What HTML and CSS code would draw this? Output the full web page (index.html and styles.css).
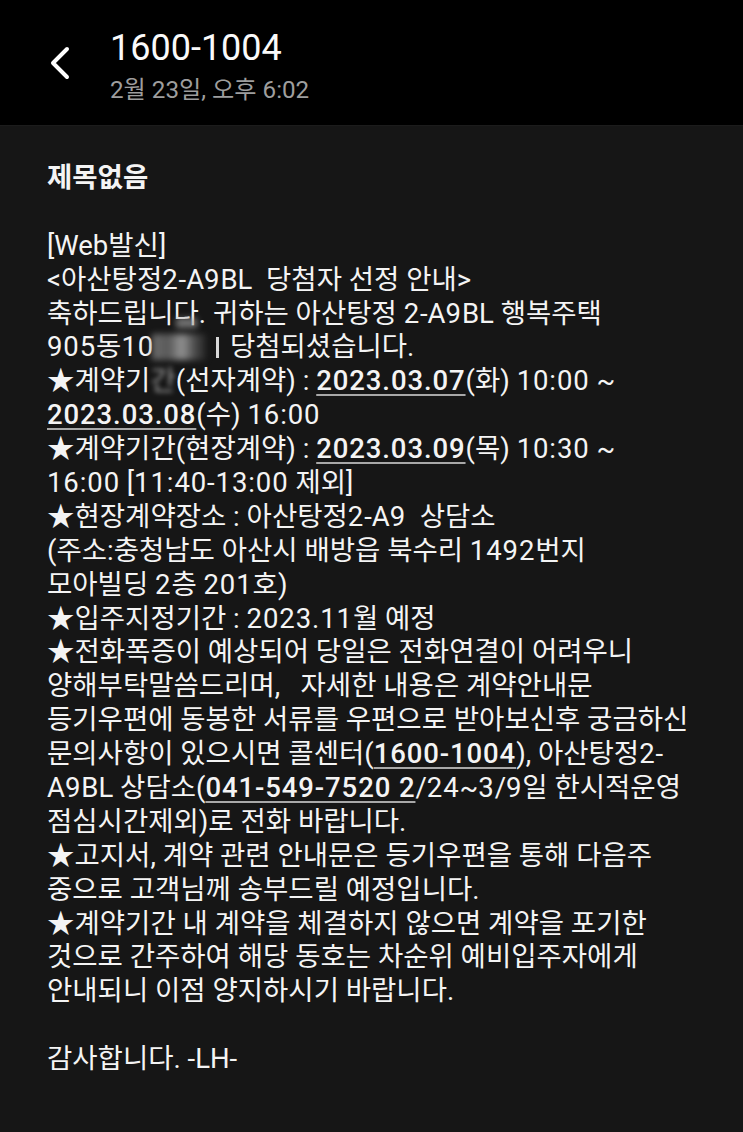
FILE: index.html
```html
<!DOCTYPE html>
<html lang="ko">
<head>
<meta charset="utf-8">
<title>1600-1004</title>
<link rel="stylesheet" href="styles.css">
</head>
<body>
<header class="topbar">
  <svg class="back" viewBox="0 0 24 36" width="24" height="36" aria-hidden="true">
    <path d="M19 3 L5 17 L19 31" fill="none" stroke="#fff" stroke-width="4" stroke-linecap="round" stroke-linejoin="round"/>
  </svg>
  <div class="titles">
    <div class="title">1600-1004</div>
    <div class="date">2월 23일, 오후 6:02</div>
  </div>
</header>
<main class="msg">
  <div class="line subject">제목없음</div>
  <div class="line blank"></div>
  <div class="line">[Web발신]</div>
  <div class="line">&lt;아산탕정<span class="n">2</span>-A<span class="n">9</span>BL  당첨자 선정 안내&gt;</div>
  <div class="line">축하드립니<span class="smudged">다</span>. 귀하는 아산탕정 <span class="n">2</span>-A<span class="n">9</span>BL 행복주택</div>
  <div class="line"><span class="n">905</span>동<span class="n">10</span><span class="blur"></span><span class="bar"></span> 당첨되셨습니다.</div>
  <div class="line">★계약기<span class="hide">간</span>(선자계약) : <span class="n u">2023.03.07</span>(화) <span class="n">10:00</span> ~</div>
  <div class="line"><span class="n u">2023.03.08</span>(수) <span class="n">16:00</span></div>
  <div class="line">★계약기간(현장계약) : <span class="n u">2023.03.09</span>(목) <span class="n">10:30</span> ~</div>
  <div class="line"><span class="n">16:00</span> [<span class="n">11:40-13:00</span> 제외]</div>
  <div class="line">★현장계약장소 : 아산탕정<span class="n">2</span>-A<span class="n">9</span>  상담소</div>
  <div class="line">(주소:충청남도 아산시 배방읍 북수리 <span class="n">1492</span>번지</div>
  <div class="line">모아빌딩 <span class="n">2</span>층 <span class="n">201</span>호)</div>
  <div class="line">★입주지정기간 : <span class="n">2023.11</span>월 예정</div>
  <div class="line">★전화폭증이 예상되어 당일은 전화연결이 어려우니</div>
  <div class="line">양해부탁말씀드리며,   자세한 내용은 계약안내문</div>
  <div class="line">등기우편에 동봉한 서류를 우편으로 받아보신후 궁금하신</div>
  <div class="line">문의사항이 있으시면 콜센터(<span class="n u">1600-1004</span>), 아산탕정<span class="n">2</span>-</div>
  <div class="line">A<span class="n">9</span>BL 상담소(<span class="n u">041-549-7520 2</span>/<span class="n">24</span>~<span class="n">3</span>/<span class="n">9</span>일 한시적운영</div>
  <div class="line">점심시간제외)로 전화 바랍니다.</div>
  <div class="line">★고지서, 계약 관련 안내문은 등기우편을 통해 다음주</div>
  <div class="line">중으로 고객님께 송부드릴 예정입니다.</div>
  <div class="line">★계약기간 내 계약을 체결하지 않으면 계약을 포기한</div>
  <div class="line">것으로 간주하여 해당 동호는 차순위 예비입주자에게</div>
  <div class="line">안내되니 이점 양지하시기 바랍니다.</div>
  <div class="line blank"></div>
  <div class="line">감사합니다. -LH-</div>
</main>
</body>
</html>
```
FILE: styles.css
```css
html, body {
  margin: 0;
  padding: 0;
}
body {
  background: #161616;
  color: #f4f4f4;
  font-family: "Roboto", "Noto Sans CJK KR", sans-serif;
  width: 743px;
  min-height: 1132px;
  overflow: hidden;
}
.topbar {
  background: #000;
  height: 126px;
  display: flex;
  align-items: flex-start;
  box-sizing: border-box;
  padding-left: 48px;
  border-bottom: 1px solid #1c1c1c;
}
.back {
  margin-top: 46px;
  flex: none;
}
.titles {
  margin-left: 38px;
  padding-top: 27px;
}
.title {
  font-size: 36px;
  line-height: 42px;
  color: #fafafa;
}
.date {
  margin-top: 6px;
  font-size: 24.2px;
  line-height: 30px;
  color: #9e9e9e;
}
.msg {
  padding: 35px 0 0 47px;
  font-size: 27.5px;
  line-height: 33.9px;
}
.line {
  white-space: pre;
  height: 33.9px;
}
.subject {
  font-weight: 700;
}
.n {
  letter-spacing: 0.9px;
}
.u {
  font-weight: 500;
  text-decoration: underline;
  text-decoration-color: #a8a8a8;
  text-decoration-thickness: 2px;
  text-underline-offset: 4px;
}
.blur {
  display: inline-block;
  width: 54px;
  height: 26px;
  vertical-align: -4px;
  margin-left: -2px;
  background: linear-gradient(90deg, #8a8a8a 0%, #6e6e6e 30%, #bdbdbd 55%, #5a5a5a 80%, #2a2a2a 100%);
  filter: blur(3px);
  opacity: 0.75;
}
.bar {
  display: inline-block;
  width: 3px;
  height: 21px;
  margin-left: 10px;
  margin-right: 4px;
  vertical-align: -2px;
  background: #d8d8d8;
  filter: blur(0.6px);
}
.hide {
  filter: blur(2.5px);
  opacity: 0.6;
}
.smudged {
  position: relative;
}
.smudged::after {
  content: "";
  position: absolute;
  left: 2px;
  right: 2px;
  bottom: 2px;
  height: 10px;
  background: #9a9a9a;
  filter: blur(3px);
  opacity: 0.7;
}
```
